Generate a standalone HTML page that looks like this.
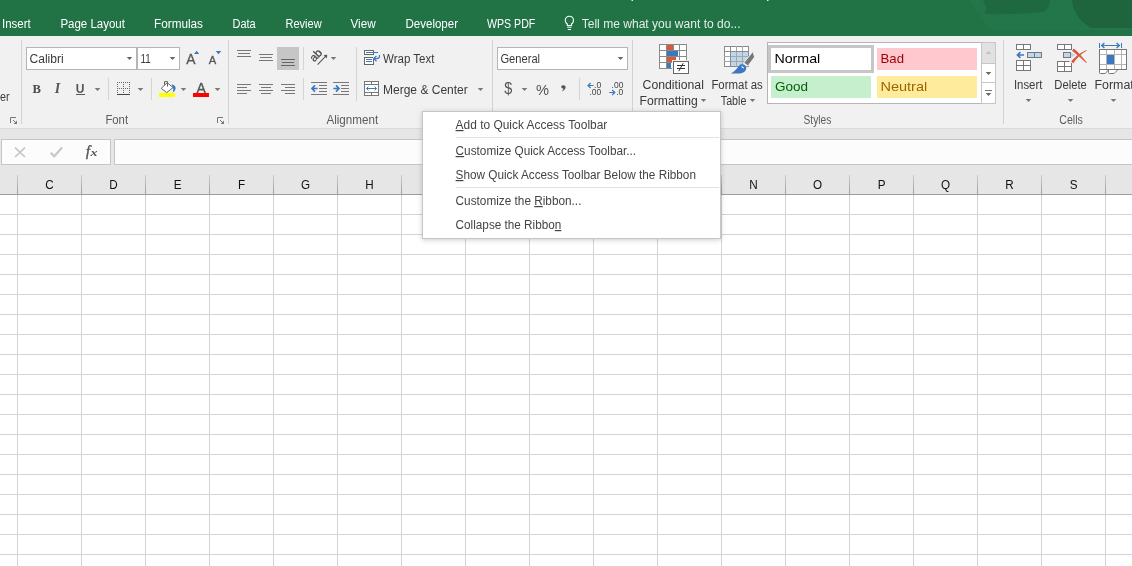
<!DOCTYPE html>
<html>
<head>
<meta charset="utf-8">
<title>Excel</title>
<style>
*{box-sizing:border-box;margin:0;padding:0}
html,body{width:1132px;height:566px;overflow:hidden;background:#fff}
body{position:relative;font-family:"Liberation Sans",sans-serif;font-size:12px;color:#444}
.abs{position:absolute}
svg.abs{will-change:transform}
.t{position:absolute;white-space:nowrap;transform-origin:0 0;line-height:1}
#green{left:0;top:0;width:1132px;height:36px;background:#217346}
#ribbon{left:0;top:36px;width:1132px;height:92px;background:#f1f1f1}
#ribline{left:0;top:128px;width:1132px;height:1px;background:#dadada}
#fbar{left:0;top:129px;width:1132px;height:66px;background:#e6e6e6}
#grid{left:0;top:195px;width:1132px;height:371px;background-color:#fff;
 background-image:linear-gradient(to right,#d4d4d4 1px,transparent 1px),linear-gradient(to bottom,#d4d4d4 1px,transparent 1px);
 background-size:64px 20px,64px 20px;background-position:17px 0,0 19px}
#hdrline{left:0;top:194px;width:1132px;height:1px;background:#9d9d9d}
.vsep{position:absolute;width:1px;background:#d2d2d2}
.box{position:absolute;background:#fff;border:1px solid #c6c6c6}
.hd{position:absolute;top:175px;width:1px;height:19px;background:linear-gradient(#cdcdcd,#9c9c9c)}
#menu{left:422px;top:111px;width:299px;height:128px;background:#fff;border:1px solid #c6c6c6;box-shadow:0 1px 5px rgba(0,0,0,.2)}
.msep{position:absolute;left:456px;width:263px;height:1px;background:#e1e1e1}
</style>
</head>
<body>
<div id="green" class="abs"></div>
<svg class="abs" style="left:0;top:0" width="1132" height="36">
<path d="M970 0H1132V30H992C984 23 975 11 970 0Z" fill="#257a4c" opacity=".5"/>
<path d="M983 0H1050C1050 5 1048 9 1044 11.500C1030 14 1008 14.500 985 14C984 12 986 10 987 8C985 5 984 3 983 0Z" fill="#1f6940"/>
<path d="M1072 0H1132V28H1092C1082 24 1073 13 1072 0Z" fill="#1e653e"/>
<rect x="631.500" y="0" width="1.500" height="1" fill="#fff" opacity=".9"/><rect x="767" y="0" width="1.500" height="1" fill="#fff" opacity=".9"/>
</svg>
<div id="ribbon" class="abs"></div>
<div id="ribline" class="abs"></div>
<div id="fbar" class="abs"></div>
<div id="grid" class="abs"></div>
<div id="hdrline" class="abs"></div>
<div class="hd" style="left:17px"></div>
<div class="hd" style="left:81px"></div>
<div class="hd" style="left:145px"></div>
<div class="hd" style="left:209px"></div>
<div class="hd" style="left:273px"></div>
<div class="hd" style="left:337px"></div>
<div class="hd" style="left:401px"></div>
<div class="hd" style="left:465px"></div>
<div class="hd" style="left:529px"></div>
<div class="hd" style="left:593px"></div>
<div class="hd" style="left:657px"></div>
<div class="hd" style="left:721px"></div>
<div class="hd" style="left:785px"></div>
<div class="hd" style="left:849px"></div>
<div class="hd" style="left:913px"></div>
<div class="hd" style="left:977px"></div>
<div class="hd" style="left:1041px"></div>
<div class="hd" style="left:1105px"></div>
<svg class="abs" style="left:0;top:0" width="1132" height="566" font-family='"Liberation Sans", sans-serif' font-size="13" fill="#111" text-anchor="middle">
<text transform="translate(49.6 189) scale(.9 1)">C</text>
<text transform="translate(113.6 189) scale(.9 1)">D</text>
<text transform="translate(177.6 189) scale(.9 1)">E</text>
<text transform="translate(241.6 189) scale(.9 1)">F</text>
<text transform="translate(305.6 189) scale(.9 1)">G</text>
<text transform="translate(369.6 189) scale(.9 1)">H</text>
<text transform="translate(433.6 189) scale(.9 1)">I</text>
<text transform="translate(497.6 189) scale(.9 1)">J</text>
<text transform="translate(561.6 189) scale(.9 1)">K</text>
<text transform="translate(625.6 189) scale(.9 1)">L</text>
<text transform="translate(689.6 189) scale(.9 1)">M</text>
<text transform="translate(753.6 189) scale(.9 1)">N</text>
<text transform="translate(817.6 189) scale(.9 1)">O</text>
<text transform="translate(881.6 189) scale(.9 1)">P</text>
<text transform="translate(945.6 189) scale(.9 1)">Q</text>
<text transform="translate(1009.6 189) scale(.9 1)">R</text>
<text transform="translate(1073.6 189) scale(.9 1)">S</text>
</svg>
<!-- group separators -->
<div class="vsep" style="left:21px;top:40px;height:84px"></div>
<div class="vsep" style="left:228px;top:40px;height:84px"></div>
<div class="vsep" style="left:492px;top:40px;height:84px"></div>
<div class="vsep" style="left:632px;top:40px;height:84px"></div>
<div class="vsep" style="left:1003px;top:40px;height:84px"></div>
<!-- formula bar boxes -->
<div class="box" style="left:1px;top:139px;width:110px;height:26px;background:#fcfcfc"></div>
<div class="box" style="left:114px;top:139px;width:1030px;height:26px;background:#fcfcfc"></div>
<svg class="abs" style="left:0;top:0" width="1132" height="566" font-family='"Liberation Sans", sans-serif'>
<rect x="26.5" y="47.5" width="110" height="22" fill="#fff" stroke="#b5b5b5"/>
<rect x="137.5" y="47.5" width="42" height="22" fill="#fff" stroke="#b5b5b5"/>
<path d="M126.7 57h5.6l-2.8 3.1z" fill="#666"/>
<path d="M169.7 57h5.6l-2.8 3.1z" fill="#666"/>
<path d="M10.5 123v-5.500h5.500" fill="none" stroke="#777"/>
<path d="M13 120l3 3" fill="none" stroke="#777"/>
<path d="M13.6 124h3.400v-3.400z" fill="#777"/>
<path d="M217.5 123v-5.500h5.500" fill="none" stroke="#777"/>
<path d="M220 120l3 3" fill="none" stroke="#777"/>
<path d="M220.6 124h3.400v-3.400z" fill="#777"/>
<text x="186.2" y="64" font-size="13.8" fill="#555" stroke="#555" stroke-width=".3">A</text>
<path d="M194 54l2.6 -3.2l2.6 3.2z" fill="#3b78c2"/>
<text x="208.8" y="64" font-size="11.2" fill="#555" stroke="#555" stroke-width=".3">A</text>
<path d="M215.8 51h5.4l-2.7 3.2z" fill="#3b78c2"/>
<text x="32.4" y="93" font-size="13" font-weight="bold" font-family='"Liberation Serif", serif' fill="#4a4a4a" textLength="8.400" lengthAdjust="spacingAndGlyphs">B</text>
<text x="54.8" y="93" font-size="14" font-weight="bold" font-style="italic" font-family='"Liberation Serif", serif' fill="#555">I</text>
<text x="75.8" y="92.6" font-size="12" font-weight="bold" fill="#555">U</text>
<rect x="76" y="94" width="9" height="1" fill="#555" />
<path d="M94.7 88h5.6l-2.8 3.1z" fill="#777"/>
<rect x="108" y="78" width="1" height="22" fill="#d4d4d4" />
<rect x="117" y="82" width="1" height="1" fill="#666" />
<rect x="119" y="82" width="1" height="1" fill="#666" />
<rect x="121" y="82" width="1" height="1" fill="#666" />
<rect x="123" y="82" width="1" height="1" fill="#666" />
<rect x="125" y="82" width="1" height="1" fill="#666" />
<rect x="127" y="82" width="1" height="1" fill="#666" />
<rect x="129" y="82" width="1" height="1" fill="#666" />
<rect x="117" y="88" width="1" height="1" fill="#666" />
<rect x="119" y="88" width="1" height="1" fill="#666" />
<rect x="121" y="88" width="1" height="1" fill="#666" />
<rect x="123" y="88" width="1" height="1" fill="#666" />
<rect x="125" y="88" width="1" height="1" fill="#666" />
<rect x="127" y="88" width="1" height="1" fill="#666" />
<rect x="129" y="88" width="1" height="1" fill="#666" />
<rect x="117" y="82" width="1" height="1" fill="#666" />
<rect x="117" y="84" width="1" height="1" fill="#666" />
<rect x="117" y="86" width="1" height="1" fill="#666" />
<rect x="117" y="88" width="1" height="1" fill="#666" />
<rect x="117" y="90" width="1" height="1" fill="#666" />
<rect x="117" y="92" width="1" height="1" fill="#666" />
<rect x="123" y="82" width="1" height="1" fill="#666" />
<rect x="123" y="84" width="1" height="1" fill="#666" />
<rect x="123" y="86" width="1" height="1" fill="#666" />
<rect x="123" y="88" width="1" height="1" fill="#666" />
<rect x="123" y="90" width="1" height="1" fill="#666" />
<rect x="123" y="92" width="1" height="1" fill="#666" />
<rect x="129" y="82" width="1" height="1" fill="#666" />
<rect x="129" y="84" width="1" height="1" fill="#666" />
<rect x="129" y="86" width="1" height="1" fill="#666" />
<rect x="129" y="88" width="1" height="1" fill="#666" />
<rect x="129" y="90" width="1" height="1" fill="#666" />
<rect x="129" y="92" width="1" height="1" fill="#666" />
<rect x="117" y="94" width="13" height="1" fill="#444" />
<path d="M137.7 88h5.6l-2.8 3.1z" fill="#777"/>
<rect x="151" y="78" width="1" height="22" fill="#d4d4d4" />
<rect x="159" y="93" width="16" height="4" fill="#ffff00" />
<path d="M167.2 82.6L173 87.6L166.8 92.6L161.2 88.4Z" fill="#fff" stroke="#666" stroke-width="1" stroke-linejoin="round"/>
<path d="M164.5 85v-3.4h3v5" fill="none" stroke="#666" stroke-width="1"/>
<path d="M171.600 84.600c2.600 0 4.200 1.800 4 4c-.2 1.800 -1.400 3.200 -3 4c.6 -1.800 .9 -3.400 .5 -4.600z" fill="#3b78c2"/>
<path d="M180.7 88h5.6l-2.8 3.1z" fill="#777"/>
<text x="196.4" y="93" font-size="14" fill="#555" stroke="#555" stroke-width=".35">A</text>
<rect x="193" y="93" width="16" height="4" fill="#ff0000" />
<path d="M214.7 88h5.6l-2.8 3.1z" fill="#777"/>
<rect x="237" y="50" width="14" height="1" fill="#777" />
<rect x="238" y="53" width="12" height="1" fill="#777" />
<rect x="237" y="56" width="14" height="1" fill="#777" />
<rect x="259" y="54" width="14" height="1" fill="#777" />
<rect x="260" y="57" width="12" height="1" fill="#777" />
<rect x="259" y="60" width="14" height="1" fill="#777" />
<rect x="277" y="47" width="22" height="23" fill="#c6c6c6" />
<rect x="281" y="59" width="14" height="1" fill="#666" />
<rect x="282" y="62" width="12" height="1" fill="#666" />
<rect x="281" y="65" width="14" height="1" fill="#666" />
<rect x="303" y="47" width="1" height="23" fill="#d4d4d4" />
<g transform="translate(314.2 62.6) rotate(-47)"><text x="0" y="0" font-size="11.5" fill="#444" stroke="#444" stroke-width=".25">ab</text></g>
<path d="M317.6 64.6L326.4 55.4" stroke="#555" stroke-width="1.1" fill="none"/>
<path d="M323.600 55.100L327.200 54.800L326.900 58.400Z" fill="#555"/>
<path d="M330.7 57h5.6l-2.8 3.1z" fill="#777"/>
<rect x="356" y="47" width="1" height="54" fill="#d4d4d4" />
<rect x="237" y="84" width="14" height="1" fill="#777" />
<rect x="237" y="87" width="10" height="1" fill="#777" />
<rect x="237" y="90" width="14" height="1" fill="#777" />
<rect x="237" y="93" width="10" height="1" fill="#777" />
<rect x="259" y="84" width="14" height="1" fill="#777" />
<rect x="261" y="87" width="10" height="1" fill="#777" />
<rect x="259" y="90" width="14" height="1" fill="#777" />
<rect x="261" y="93" width="10" height="1" fill="#777" />
<rect x="281" y="84" width="14" height="1" fill="#777" />
<rect x="285" y="87" width="10" height="1" fill="#777" />
<rect x="281" y="90" width="14" height="1" fill="#777" />
<rect x="285" y="93" width="10" height="1" fill="#777" />
<rect x="303" y="78" width="1" height="22" fill="#d4d4d4" />
<rect x="311" y="82" width="16" height="1" fill="#777" />
<rect x="311" y="94" width="16" height="1" fill="#777" />
<rect x="319" y="85" width="8" height="1" fill="#777" />
<rect x="319" y="88" width="8" height="1" fill="#777" />
<rect x="319" y="91" width="8" height="1" fill="#777" />
<path d="M317.6 88.5h-5.4M315 85.4l-3 3.1l3 3.100" stroke="#3b78c2" stroke-width="1.7" fill="none"/>
<rect x="333" y="82" width="16" height="1" fill="#777" />
<rect x="333" y="94" width="16" height="1" fill="#777" />
<rect x="341" y="85" width="8" height="1" fill="#777" />
<rect x="341" y="88" width="8" height="1" fill="#777" />
<rect x="341" y="91" width="8" height="1" fill="#777" />
<path d="M333.4 88.5h5.4M336 85.4l3 3.1l-3 3.100" stroke="#3b78c2" stroke-width="1.7" fill="none"/>
<rect x="364.5" y="50.5" width="9" height="4" fill="#fff" stroke="#666"/>
<rect x="364.5" y="57.5" width="9" height="7" fill="#fff" stroke="#666"/>
<rect x="373" y="52" width="1" height="1" fill="#fff" />
<rect x="373" y="57" width="1" height="2" fill="#fff" />
<rect x="366" y="52" width="12" height="1" fill="#3b78c2" />
<rect x="366" y="59" width="6" height="1" fill="#3b78c2" />
<rect x="366" y="61" width="6" height="1" fill="#3b78c2" />
<path d="M379.500 55v1.200c0 1.800 -1.300 2.400 -2.800 2.400h-2.600" stroke="#3b78c2" stroke-width="1.200" fill="none"/>
<path d="M376.500 56l-2.800 2.600l2.800 2.600" stroke="#3b78c2" stroke-width="1.300" fill="none"/>
<rect x="364.5" y="81.5" width="14" height="14" fill="#fff" stroke="#777"/>
<rect x="364" y="84" width="15" height="1" fill="#777" />
<rect x="364" y="92" width="15" height="1" fill="#777" />
<rect x="371" y="81" width="1" height="4" fill="#777" />
<rect x="371" y="92" width="1" height="4" fill="#777" />
<path d="M366.6 88.5h10M368.4 86.6l-1.900 1.900l1.900 1.900M374.600 86.6l1.900 1.900l-1.900 1.900" stroke="#3b78c2" stroke-width="1" fill="none"/>
<path d="M477.7 88h5.6l-2.8 3.1z" fill="#777"/>
<rect x="497.5" y="47.5" width="130" height="22" fill="#fff" stroke="#b5b5b5"/>
<path d="M617.7 57h5.6l-2.8 3.1z" fill="#666"/>
<text x="504.2" y="93.8" font-size="15.6" fill="#555" textLength="8" lengthAdjust="spacingAndGlyphs">$</text>
<path d="M521.7 88h5.6l-2.8 3.1z" fill="#777"/>
<text x="536" y="94.6" font-size="14.4" fill="#555" textLength="13" lengthAdjust="spacingAndGlyphs">%</text>
<path d="M562.2 85.4c1.800 -.6 3.600 .2 3.400 2.200c-.2 1.800 -1.600 3.200 -3.800 3.800c1 -1 1.600 -1.800 1.600 -2.800c-1.200 0 -2.200 -.6 -2.200 -1.800c0 -.6 .4 -1.200 1 -1.400z" fill="#555"/>
<rect x="579" y="78" width="1" height="22" fill="#d4d4d4" />
<path d="M593.6 85.5h-5.600M590.6 83l-2.600 2.500l2.600 2.500" stroke="#3b78c2" stroke-width="1.2" fill="none"/>
<text x="594" y="88" font-size="8.8" fill="#444" textLength="7.2" lengthAdjust="spacingAndGlyphs">.0</text>
<text x="589.4" y="95" font-size="8.8" fill="#444" textLength="11.8" lengthAdjust="spacingAndGlyphs">.00</text>
<text x="611.6" y="88" font-size="8.8" fill="#444" textLength="11.8" lengthAdjust="spacingAndGlyphs">.00</text>
<path d="M609.2 92.5h5.600M612.2 90l2.600 2.500l-2.600 2.500" stroke="#3b78c2" stroke-width="1.2" fill="none"/>
<text x="616.2" y="95" font-size="8.8" fill="#444" textLength="7.2" lengthAdjust="spacingAndGlyphs">.0</text>
<rect x="659.5" y="44.5" width="27" height="24" fill="#fff" stroke="#8a8a8a"/>
<rect x="666" y="44" width="1" height="25" fill="#8a8a8a" />
<rect x="673" y="44" width="1" height="25" fill="#8a8a8a" />
<rect x="679" y="44" width="1" height="25" fill="#8a8a8a" />
<rect x="659" y="50" width="28" height="1" fill="#8a8a8a" />
<rect x="659" y="56" width="28" height="1" fill="#8a8a8a" />
<rect x="659" y="62" width="28" height="1" fill="#8a8a8a" />
<rect x="667" y="45" width="6" height="5" fill="#d9593b" />
<rect x="667" y="51" width="11" height="5" fill="#3b78c2" />
<rect x="667" y="57" width="9" height="5" fill="#d9593b" />
<rect x="667" y="63" width="4" height="5" fill="#3b78c2" />
<rect x="672" y="60" width="18" height="15" fill="#f1f1f1" />
<rect x="673.5" y="61.5" width="15" height="12" fill="#fff" stroke="#666"/>
<path d="M677 65.500h8M677 68.500h8M683.200 63.200l-4.400 8" stroke="#333" stroke-width="1" fill="none"/>
<path d="M700.7 99h5.6l-2.8 3.1z" fill="#777"/>
<rect x="724.5" y="46.5" width="24" height="20" fill="#bdd7ee" stroke="#8a8a8a"/>
<rect x="725" y="47" width="23" height="4" fill="#fff" />
<rect x="725" y="47" width="5" height="19" fill="#fff" />
<rect x="730" y="46" width="1" height="21" fill="#a6a6a6" />
<rect x="736" y="46" width="1" height="21" fill="#a6a6a6" />
<rect x="742" y="46" width="1" height="21" fill="#a6a6a6" />
<rect x="724" y="51" width="25" height="1" fill="#a6a6a6" />
<rect x="724" y="56" width="25" height="1" fill="#a6a6a6" />
<rect x="724" y="61" width="25" height="1" fill="#a6a6a6" />
<rect x="730" y="46" width="1" height="21" fill="#8a8a8a" />
<rect x="724" y="51" width="25" height="1" fill="#8a8a8a" />
<path d="M753 51.400L754.600 57L748 66L743.600 63Z" fill="#777" stroke="#f1f1f1" stroke-width="1"/>
<path d="M743.6 63.4l3.600 2.600" stroke="#f1f1f1" stroke-width="1.4"/>
<path d="M743.2 64.6c2.600 .8 3.800 3 2.600 5.400c-1 2.200 -3.600 3.600 -6.600 3.600h-8.400c4 -2 6.600 -5.400 8.400 -8c1 -1.400 2.600 -1.600 4 -1z" fill="#3b78c2"/>
<path d="M741.2 66.2c1.600 -.2 2.800 .8 2.800 2.400c-1.400 -.4 -2.400 -1.200 -2.800 -2.400z" fill="#fff"/>
<path d="M749.7 99h5.6l-2.8 3.1z" fill="#777"/>
<rect x="767.5" y="42.5" width="228" height="61" fill="#fff" stroke="#b5b5b5"/>
<rect x="768" y="45" width="106" height="28" fill="#c6c6c6" />
<rect x="771" y="48" width="100" height="22" fill="#fff" />
<rect x="877" y="48" width="100" height="22" fill="#ffc7ce" />
<rect x="771" y="76" width="100" height="22" fill="#c6efce" />
<rect x="877" y="76" width="100" height="22" fill="#ffeb9c" />
<rect x="981.5" y="42.5" width="14" height="21" fill="#e1e1e1" stroke="#c6c6c6"/>
<rect x="981.5" y="63.5" width="14" height="19" fill="#fff" stroke="#c6c6c6"/>
<rect x="981.5" y="82.5" width="14" height="21" fill="#fff" stroke="#c6c6c6"/>
<path d="M985.7 54h5.6l-2.8 -3.1z" fill="#c0c0c0"/>
<path d="M985.7 72h5.6l-2.8 3.1z" fill="#666"/>
<rect x="985" y="90" width="7" height="1" fill="#777" />
<path d="M985.7 93h5.6l-2.8 3.1z" fill="#666"/>
<rect x="1016.5" y="44.5" width="14" height="5" fill="#fff" stroke="#777"/>
<rect x="1023" y="44" width="1" height="6" fill="#777" />
<rect x="1027.5" y="52.5" width="14" height="5" fill="#bdd7ee" stroke="#777"/>
<rect x="1034" y="52" width="1" height="6" fill="#777" />
<rect x="1016.5" y="60.5" width="14" height="10" fill="#fff" stroke="#777"/>
<rect x="1023" y="60" width="1" height="11" fill="#777" />
<rect x="1016" y="65" width="15" height="1" fill="#777" />
<path d="M1024 55h-5.500M1020.400 52.200l-2.900 2.800l2.900 2.800" stroke="#3b78c2" stroke-width="1.700" fill="none"/>
<path d="M1025.7 99h5.6l-2.8 3.1z" fill="#777"/>
<rect x="1057.5" y="44.5" width="14" height="5" fill="#fff" stroke="#777"/>
<rect x="1064" y="44" width="1" height="6" fill="#777" />
<path d="M1070.500 52.300L1075.600 55L1070.500 57.700z" fill="#bdd7ee"/>
<rect x="1063.5" y="52.5" width="7" height="5" fill="#bdd7ee" stroke="#777"/>
<rect x="1057.5" y="61.5" width="14" height="10" fill="#fff" stroke="#777"/>
<rect x="1064" y="61" width="1" height="11" fill="#777" />
<rect x="1057" y="66" width="15" height="1" fill="#777" />
<rect x="1069.5" y="60" width="4" height="3" fill="#f1f1f1" />
<path d="M1072 50.800L1073.800 48.600C1078 52 1082.500 57 1086.800 62.500L1086.200 63.100C1081.500 58.500 1076.500 54 1072 50.800Z" fill="#d9593b"/>
<path d="M1071.200 61.200L1073.200 63.600C1076.500 58.500 1081 54 1086.800 50.600L1086.300 49.900C1080.500 52.500 1075 56.500 1071.200 61.200Z" fill="#d9593b"/>
<path d="M1067.7 99h5.6l-2.8 3.1z" fill="#777"/>
<path d="M1099.500 43v5M1121.500 43v5M1101.400 45.500h18.200" stroke="#3b78c2" stroke-width="1" fill="none"/><path d="M1104.400 43l-2.700 2.500l2.700 2.500M1116.600 43l2.700 2.500l-2.700 2.500" stroke="#3b78c2" stroke-width="1.400" fill="none"/>
<rect x="1099.5" y="49.5" width="27" height="20" fill="#fff" stroke="#777"/>
<rect x="1106" y="50" width="1" height="19" fill="#b4b4b4" />
<rect x="1114" y="50" width="1" height="19" fill="#b4b4b4" />
<rect x="1121" y="50" width="1" height="19" fill="#b4b4b4" />
<rect x="1100" y="54" width="26" height="1" fill="#b4b4b4" />
<rect x="1100" y="64" width="26" height="1" fill="#b4b4b4" />
<rect x="1107" y="55" width="7" height="9" fill="#3b78c2" />
<path d="M1099.500 70v2.700q0 .8 .8 .8h5l2.700 -3.300M1108.500 70v2.700q0 .8 .8 .8h4.800l3.400 -3.500" stroke="#777" fill="#fff"/>
<path d="M1110.7 99h5.6l-2.8 3.1z" fill="#777"/>
<path d="M15 147.600l10 9.400M25 147.600l-10 9.400" stroke="#c6c6c6" stroke-width="1.700" fill="none"/>
<path d="M50.600 152.800l3.600 3.600l7.800 -9" stroke="#c8c8c8" stroke-width="2.300" fill="none"/>
<text x="86" y="156" font-size="14" font-style="italic" font-family='"Liberation Serif", serif' fill="#555" stroke="#555" stroke-width=".45">f</text>
<text x="90.400" y="156" font-size="10.500" font-style="italic" font-weight="bold" font-family='"Liberation Serif", serif' fill="#555" textLength="7" lengthAdjust="spacingAndGlyphs">x</text>
<path d="M567.300 25.500v-1.500c-1.300 -1 -2 -2.200 -2 -3.600a4.100 4.100 0 0 1 8.200 0c0 1.400 -.7 2.600 -2 3.600v1.500z" stroke="#fff" stroke-width="1.150" fill="none"/>
<path d="M567.200 27.200h4.400M567.800 29.500h3.200" stroke="#fff" stroke-width="1" fill="none"/>
</svg>
<svg class="abs" style="left:0;top:0" width="1132" height="566" font-family='"Liberation Sans", sans-serif'>
<text x="1.94" y="28" font-size="12" fill="#ffffff" textLength="28.72" lengthAdjust="spacingAndGlyphs">Insert</text>
<text x="60.40" y="28" font-size="12" fill="#ffffff" textLength="64.56" lengthAdjust="spacingAndGlyphs">Page Layout</text>
<text x="154.00" y="28" font-size="12" fill="#ffffff" textLength="49.00" lengthAdjust="spacingAndGlyphs">Formulas</text>
<text x="232.50" y="28" font-size="12" fill="#ffffff" textLength="23.20" lengthAdjust="spacingAndGlyphs">Data</text>
<text x="285.50" y="28" font-size="12" fill="#ffffff" textLength="36.19" lengthAdjust="spacingAndGlyphs">Review</text>
<text x="350.50" y="28" font-size="12" fill="#ffffff" textLength="25.17" lengthAdjust="spacingAndGlyphs">View</text>
<text x="405.50" y="28" font-size="12" fill="#ffffff" textLength="52.50" lengthAdjust="spacingAndGlyphs">Developer</text>
<text x="487.00" y="28" font-size="12" fill="#ffffff" textLength="48.29" lengthAdjust="spacingAndGlyphs">WPS PDF</text>
<text x="581.70" y="28" font-size="12" fill="#e3efe8" textLength="158.84" lengthAdjust="spacingAndGlyphs">Tell me what you want to do...</text>
<text x="0.00" y="101" font-size="12" fill="#3a3a3a" textLength="9.50" lengthAdjust="spacingAndGlyphs">er</text>
<text x="29.50" y="63" font-size="12" fill="#3a3a3a" textLength="34.17" lengthAdjust="spacingAndGlyphs">Calibri</text>
<text x="140.50" y="63" font-size="12" fill="#3a3a3a" textLength="10.23" lengthAdjust="spacingAndGlyphs">11</text>
<text x="105.40" y="124" font-size="12" fill="#5c5c5c" textLength="22.67" lengthAdjust="spacingAndGlyphs">Font</text>
<text x="383.00" y="63" font-size="12" fill="#3a3a3a" textLength="51.36" lengthAdjust="spacingAndGlyphs">Wrap Text</text>
<text x="383.00" y="94" font-size="12" fill="#3a3a3a" textLength="84.80" lengthAdjust="spacingAndGlyphs">Merge &amp; Center</text>
<text x="326.40" y="124" font-size="12" fill="#5c5c5c" textLength="51.75" lengthAdjust="spacingAndGlyphs">Alignment</text>
<text x="500.40" y="63" font-size="12" fill="#3a3a3a" textLength="39.72" lengthAdjust="spacingAndGlyphs">General</text>
<text x="642.60" y="89" font-size="12" fill="#3a3a3a" textLength="61.28" lengthAdjust="spacingAndGlyphs">Conditional</text>
<text x="639.60" y="105" font-size="12" fill="#3a3a3a" textLength="58.08" lengthAdjust="spacingAndGlyphs">Formatting</text>
<text x="711.40" y="89" font-size="12" fill="#3a3a3a" textLength="51.40" lengthAdjust="spacingAndGlyphs">Format as</text>
<text x="720.80" y="105" font-size="12" fill="#3a3a3a" textLength="25.61" lengthAdjust="spacingAndGlyphs">Table</text>
<text x="803.50" y="124" font-size="12" fill="#5c5c5c" textLength="27.80" lengthAdjust="spacingAndGlyphs">Styles</text>
<text x="1013.95" y="89" font-size="12" fill="#3a3a3a" textLength="28.42" lengthAdjust="spacingAndGlyphs">Insert</text>
<text x="1054.30" y="89" font-size="12" fill="#3a3a3a" textLength="32.49" lengthAdjust="spacingAndGlyphs">Delete</text>
<text x="1094.50" y="89" font-size="12" fill="#3a3a3a" textLength="39.31" lengthAdjust="spacingAndGlyphs">Format</text>
<text x="1059.30" y="124" font-size="12" fill="#5c5c5c" textLength="23.60" lengthAdjust="spacingAndGlyphs">Cells</text>
<text x="774.45" y="63" font-size="13.5" fill="#000000" textLength="45.85" lengthAdjust="spacingAndGlyphs">Normal</text>
<text x="880.52" y="63" font-size="13.5" fill="#9c0006" textLength="23.47" lengthAdjust="spacingAndGlyphs">Bad</text>
<text x="775.00" y="91" font-size="13.5" fill="#006100" textLength="33.01" lengthAdjust="spacingAndGlyphs">Good</text>
<text x="880.43" y="91" font-size="13.5" fill="#9c6500" textLength="46.77" lengthAdjust="spacingAndGlyphs">Neutral</text>
</svg>
<!-- context menu -->
<div id="menu" class="abs"></div>
<div class="msep" style="top:137px"></div>
<div class="msep" style="top:187px"></div>
<svg class="abs" style="left:0;top:0" width="1132" height="566" font-family='"Liberation Sans", sans-serif'>
<text x="455.60" y="129" font-size="12" fill="#444444" textLength="151.70" lengthAdjust="spacingAndGlyphs"><tspan text-decoration="underline">A</tspan>dd to Quick Access Toolbar</text>
<text x="455.60" y="155" font-size="12" fill="#444444" textLength="180.53" lengthAdjust="spacingAndGlyphs"><tspan text-decoration="underline">C</tspan>ustomize Quick Access Toolbar...</text>
<text x="455.60" y="179" font-size="12" fill="#444444" textLength="240.36" lengthAdjust="spacingAndGlyphs"><tspan text-decoration="underline">S</tspan>how Quick Access Toolbar Below the Ribbon</text>
<text x="455.60" y="205" font-size="12" fill="#444444" textLength="125.83" lengthAdjust="spacingAndGlyphs">Customize the <tspan text-decoration="underline">R</tspan>ibbon...</text>
<text x="455.60" y="229" font-size="12" fill="#444444" textLength="105.76" lengthAdjust="spacingAndGlyphs">Collapse the Ribbo<tspan text-decoration="underline">n</tspan></text>
</svg>
</body>
</html>
